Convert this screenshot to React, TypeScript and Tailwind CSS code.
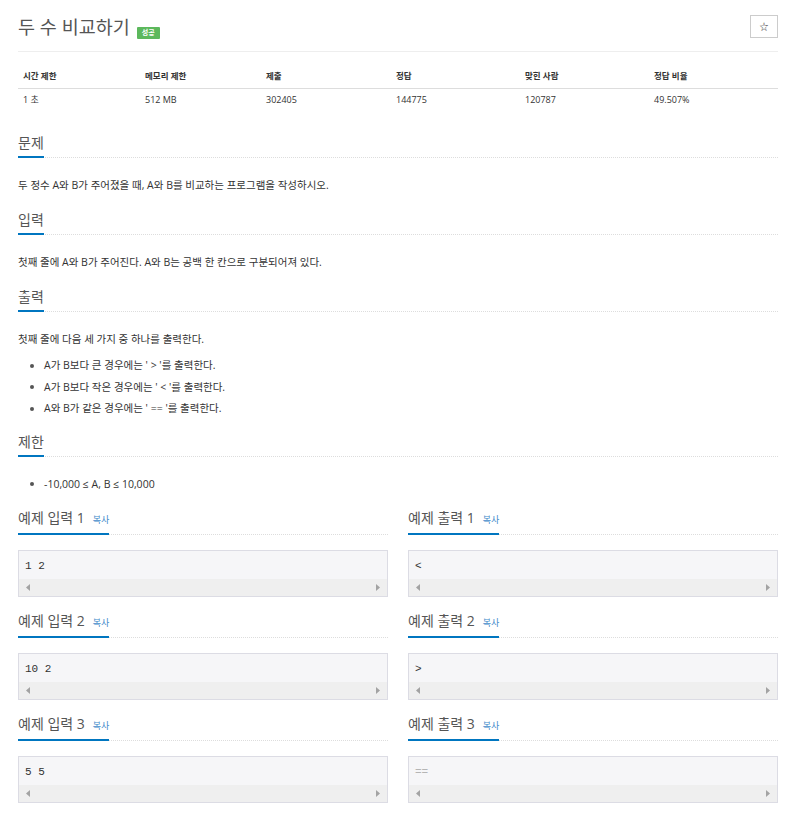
import React from "react";

const stats = [
  { label: "시간 제한", value: "1 초" },
  { label: "메모리 제한", value: "512 MB" },
  { label: "제출", value: "302405" },
  { label: "정답", value: "144775" },
  { label: "맞힌 사람", value: "120787" },
  { label: "정답 비율", value: "49.507%" },
];

const samples = [
  { input: "1 2", output: "<" },
  { input: "10 2", output: ">" },
  { input: "5 5", output: "==" },
];

function Heading({ children }: { children: React.ReactNode }) {
  return (
    <div className="border-b border-dotted border-[#dddddd]">
      <span className="-mb-px inline-block border-b-2 border-[#0076c0] pb-[3px] text-[14px] leading-[20px] text-[#555]">
        {children}
      </span>
    </div>
  );
}

function Bullet({ children }: { children: React.ReactNode }) {
  return (
    <li className="flex items-center leading-[21.5px]">
      <span className="ml-[12px] mr-[10px] h-[4px] w-[4px] rounded-full bg-[#555]" />
      <span>{children}</span>
    </li>
  );
}

function SampleBox({ text }: { text: string }) {
  return (
    <div className="mt-[15px] border border-[#dcdce4] bg-[#f6f6f8]">
      <pre
        className={`h-[28px] px-[6px] pt-[8px] font-['Liberation_Mono',monospace] text-[11px] leading-[14px] ${
          text === "==" ? "text-[#b5b5b5]" : "text-[#333]"
        }`}
      >
        {text}
      </pre>
      <div className="flex h-[17px] items-center justify-between bg-[#efefef] px-[7px]">
        <svg width="4" height="7" viewBox="0 0 4 7">
          <path d="M4 0 L0 3.5 L4 7 Z" fill="#a3a3a3" />
        </svg>
        <svg width="4" height="7" viewBox="0 0 4 7">
          <path d="M0 0 L4 3.5 L0 7 Z" fill="#a3a3a3" />
        </svg>
      </div>
    </div>
  );
}

function SampleHeading({ title }: { title: string }) {
  return (
    <Heading>
      {title}
      <span className="ml-[8px] text-[9px] text-[#428bca]">복사</span>
    </Heading>
  );
}

export default function App() {
  return (
    <div className="bg-white pl-[18px] pr-[12px] pt-[15px] pb-[8px] font-['Open_Sans','Noto_Sans_CJK_KR',sans-serif] text-[10.5px] text-[#333]">
      {/* 제목 */}
      <div className="flex items-start justify-between border-b border-[#eeeeee] pb-[12px]">
        <div className="flex items-start">
          <h1 className="text-[18.5px] leading-[24px] text-[#555]">두 수 비교하기</h1>
          <span className="ml-[7px] mt-[12px] flex h-[12px] w-[23px] items-center justify-center rounded-[1px] bg-[#5cb85c] text-[7px] font-bold text-white">
            성공
          </span>
        </div>
        <button className="flex h-[23px] w-[28px] items-center justify-center border border-[#cccccc] bg-white text-[9px] text-[#333]">
          ☆
        </button>
      </div>

      {/* 통계 테이블 */}
      <div className="mt-[13px]">
        <div className="grid h-[24px] grid-cols-[122px_121px_130px_129px_129px_1fr] items-center border-b border-[#dddddd] pl-[5px] text-[8.5px] font-bold">
          {stats.map((s) => (
            <div key={s.label}>{s.label}</div>
          ))}
        </div>
        <div className="grid h-[22px] grid-cols-[122px_121px_130px_129px_129px_1fr] items-center pl-[5px] text-[9px]">
          {stats.map((s) => (
            <div key={s.label}>{s.value}</div>
          ))}
        </div>
      </div>

      {/* 문제 */}
      <section className="mt-[22px]">
        <Heading>문제</Heading>
        <p className="mt-[19px] leading-[16px]">
          두 정수 A와 B가 주어졌을 때, A와 B를 비교하는 프로그램을 작성하시오.
        </p>
      </section>

      {/* 입력 */}
      <section className="mt-[17px]">
        <Heading>입력</Heading>
        <p className="mt-[19px] leading-[16px]">
          첫째 줄에 A와 B가 주어진다. A와 B는 공백 한 칸으로 구분되어져 있다.
        </p>
      </section>

      {/* 출력 */}
      <section className="mt-[17px]">
        <Heading>출력</Heading>
        <p className="mt-[19px] leading-[16px]">첫째 줄에 다음 세 가지 중 하나를 출력한다.</p>
        <ul className="mt-[8px]">
          <Bullet>A가 B보다 큰 경우에는 &apos; &gt; &apos;를 출력한다.</Bullet>
          <Bullet>A가 B보다 작은 경우에는 &apos; &lt; &apos;를 출력한다.</Bullet>
          <Bullet>A와 B가 같은 경우에는 &apos; == &apos;를 출력한다.</Bullet>
        </ul>
      </section>

      {/* 제한 */}
      <section className="mt-[12px]">
        <Heading>제한</Heading>
        <ul className="mt-[17px]">
          <Bullet>-10,000 ≤ A, B ≤ 10,000</Bullet>
        </ul>
      </section>

      {/* 예제 */}
      <div className="mt-[12.5px] grid grid-cols-2 gap-x-[20px] gap-y-[14px]">
        {samples.map((s, i) => (
          <React.Fragment key={i}>
            <div>
              <SampleHeading title={`예제 입력 ${i + 1}`} />
              <SampleBox text={s.input} />
            </div>
            <div>
              <SampleHeading title={`예제 출력 ${i + 1}`} />
              <SampleBox text={s.output} />
            </div>
          </React.Fragment>
        ))}
      </div>
    </div>
  );
}
